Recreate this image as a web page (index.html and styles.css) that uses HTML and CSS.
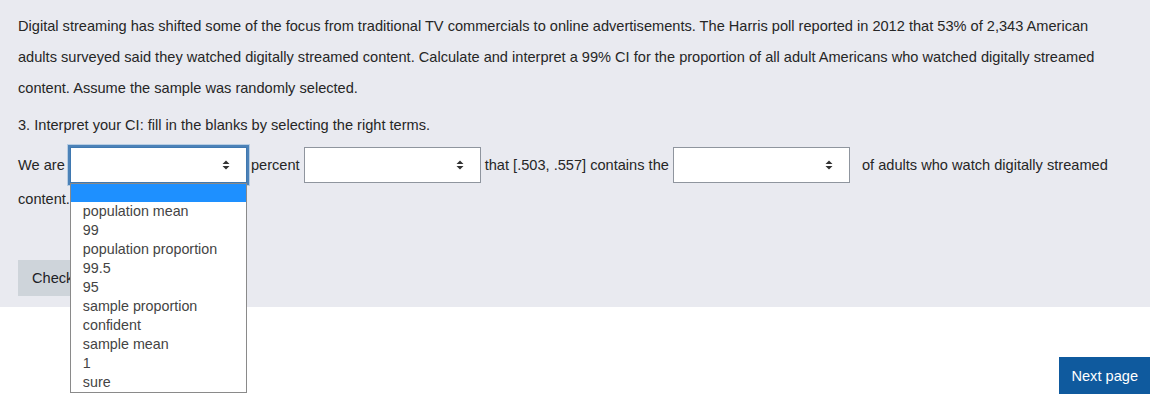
FILE: index.html
```html
<!DOCTYPE html>
<html>
<head>
<meta charset="utf-8">
<link rel="stylesheet" href="styles.css">
</head>
<body>
<div class="page">
  <div class="formulation">
    <p class="qtext">Digital streaming has shifted some of the focus from traditional TV commercials to online advertisements. The Harris poll reported in 2012 that 53% of 2,343 American adults surveyed said they watched digitally streamed content. Calculate and interpret a 99% CI for the proportion of all adult Americans who watched digitally streamed content. Assume the sample was randomly selected.</p>
    <p class="qtext">3. Interpret your CI: fill in the blanks by selecting the right terms.</p>
    <p class="answer">We are <span class="select focused"><svg class="arrows" width="8" height="10" viewBox="0 0 8 10"><path d="M0.5 4 L4 0.5 L7.5 4 Z M0.5 6 L4 9.5 L7.5 6 Z" fill="#333"/></svg><span class="dropdown"><span class="opt sel"></span><span class="opt">population mean</span><span class="opt">99</span><span class="opt">population proportion</span><span class="opt">99.5</span><span class="opt">95</span><span class="opt">sample proportion</span><span class="opt">confident</span><span class="opt">sample mean</span><span class="opt">1</span><span class="opt">sure</span></span></span> percent <span class="select"><svg class="arrows" width="8" height="10" viewBox="0 0 8 10"><path d="M0.5 4 L4 0.5 L7.5 4 Z M0.5 6 L4 9.5 L7.5 6 Z" fill="#333"/></svg></span> that [.503, .557] contains the <span class="select last"><svg class="arrows" width="8" height="10" viewBox="0 0 8 10"><path d="M0.5 4 L4 0.5 L7.5 4 Z M0.5 6 L4 9.5 L7.5 6 Z" fill="#333"/></svg></span> of adults who watch digitally streamed content.</p>
    <div class="actions"><button class="check">Check</button></div>
  </div>
  <div class="nav"><button class="next">Next page</button></div>
</div>
</body>
</html>
```
FILE: styles.css
```css
html, body {
  margin: 0;
  padding: 0;
  background: #fff;
}
body {
  font-family: "Liberation Sans", Arial, sans-serif;
  font-size: 14.6px;
  color: #262626;
}
.page {
  width: 1150px;
}
.formulation {
  background: #e9eaf0;
  padding: 11px 18px 11px 18px;
}
.qtext {
  margin: 0 0 6px;
  line-height: 31px;
  max-width: 1094px;
}
.answer {
  margin: 3px 0 0;
  line-height: 32px;
}
.select {
  position: relative;
  display: inline-block;
  vertical-align: -13px;
  width: 175px;
  height: 34px;
  background: #fff;
  border: 1px solid #8f959e;
  box-sizing: content-box;
}
.select.focused {
  margin-left: 1px;
  border-color: #3f78b0;
  box-shadow: 0 0 0 2px #4c82b8, 0 0 0 3px #b7cde3;
}
.select.last {
  margin-right: 8px;
}
.arrows {
  position: absolute;
  right: 16px;
  top: 12px;
}
.dropdown {
  position: absolute;
  left: -1px;
  top: 35px;
  width: 175px;
  background: #fff;
  border: 1px solid #8a8a8a;
  z-index: 5;
  display: flex;
  flex-direction: column;
  font-size: 14.3px;
  line-height: 19px;
  color: #444;
}
.opt {
  display: block;
  height: 19px;
  padding-left: 12px;
  white-space: nowrap;
}
.opt.sel {
  height: 18px;
  background: #1e90ff;
}
.actions {
  margin-top: 45px;
}
.check {
  font-family: "Liberation Sans", Arial, sans-serif;
  font-size: 14.6px;
  color: #1d2125;
  background: #ced4da;
  border: none;
  height: 36px;
  padding: 0 14px;
  display: block;
}
.nav {
  display: flex;
  justify-content: flex-end;
  margin-top: 50px;
}
.next {
  font-family: "Liberation Sans", Arial, sans-serif;
  font-size: 14.6px;
  color: #fff;
  background: #0f5a9e;
  border: none;
  height: 37px;
  padding: 0 12px;
}
```
